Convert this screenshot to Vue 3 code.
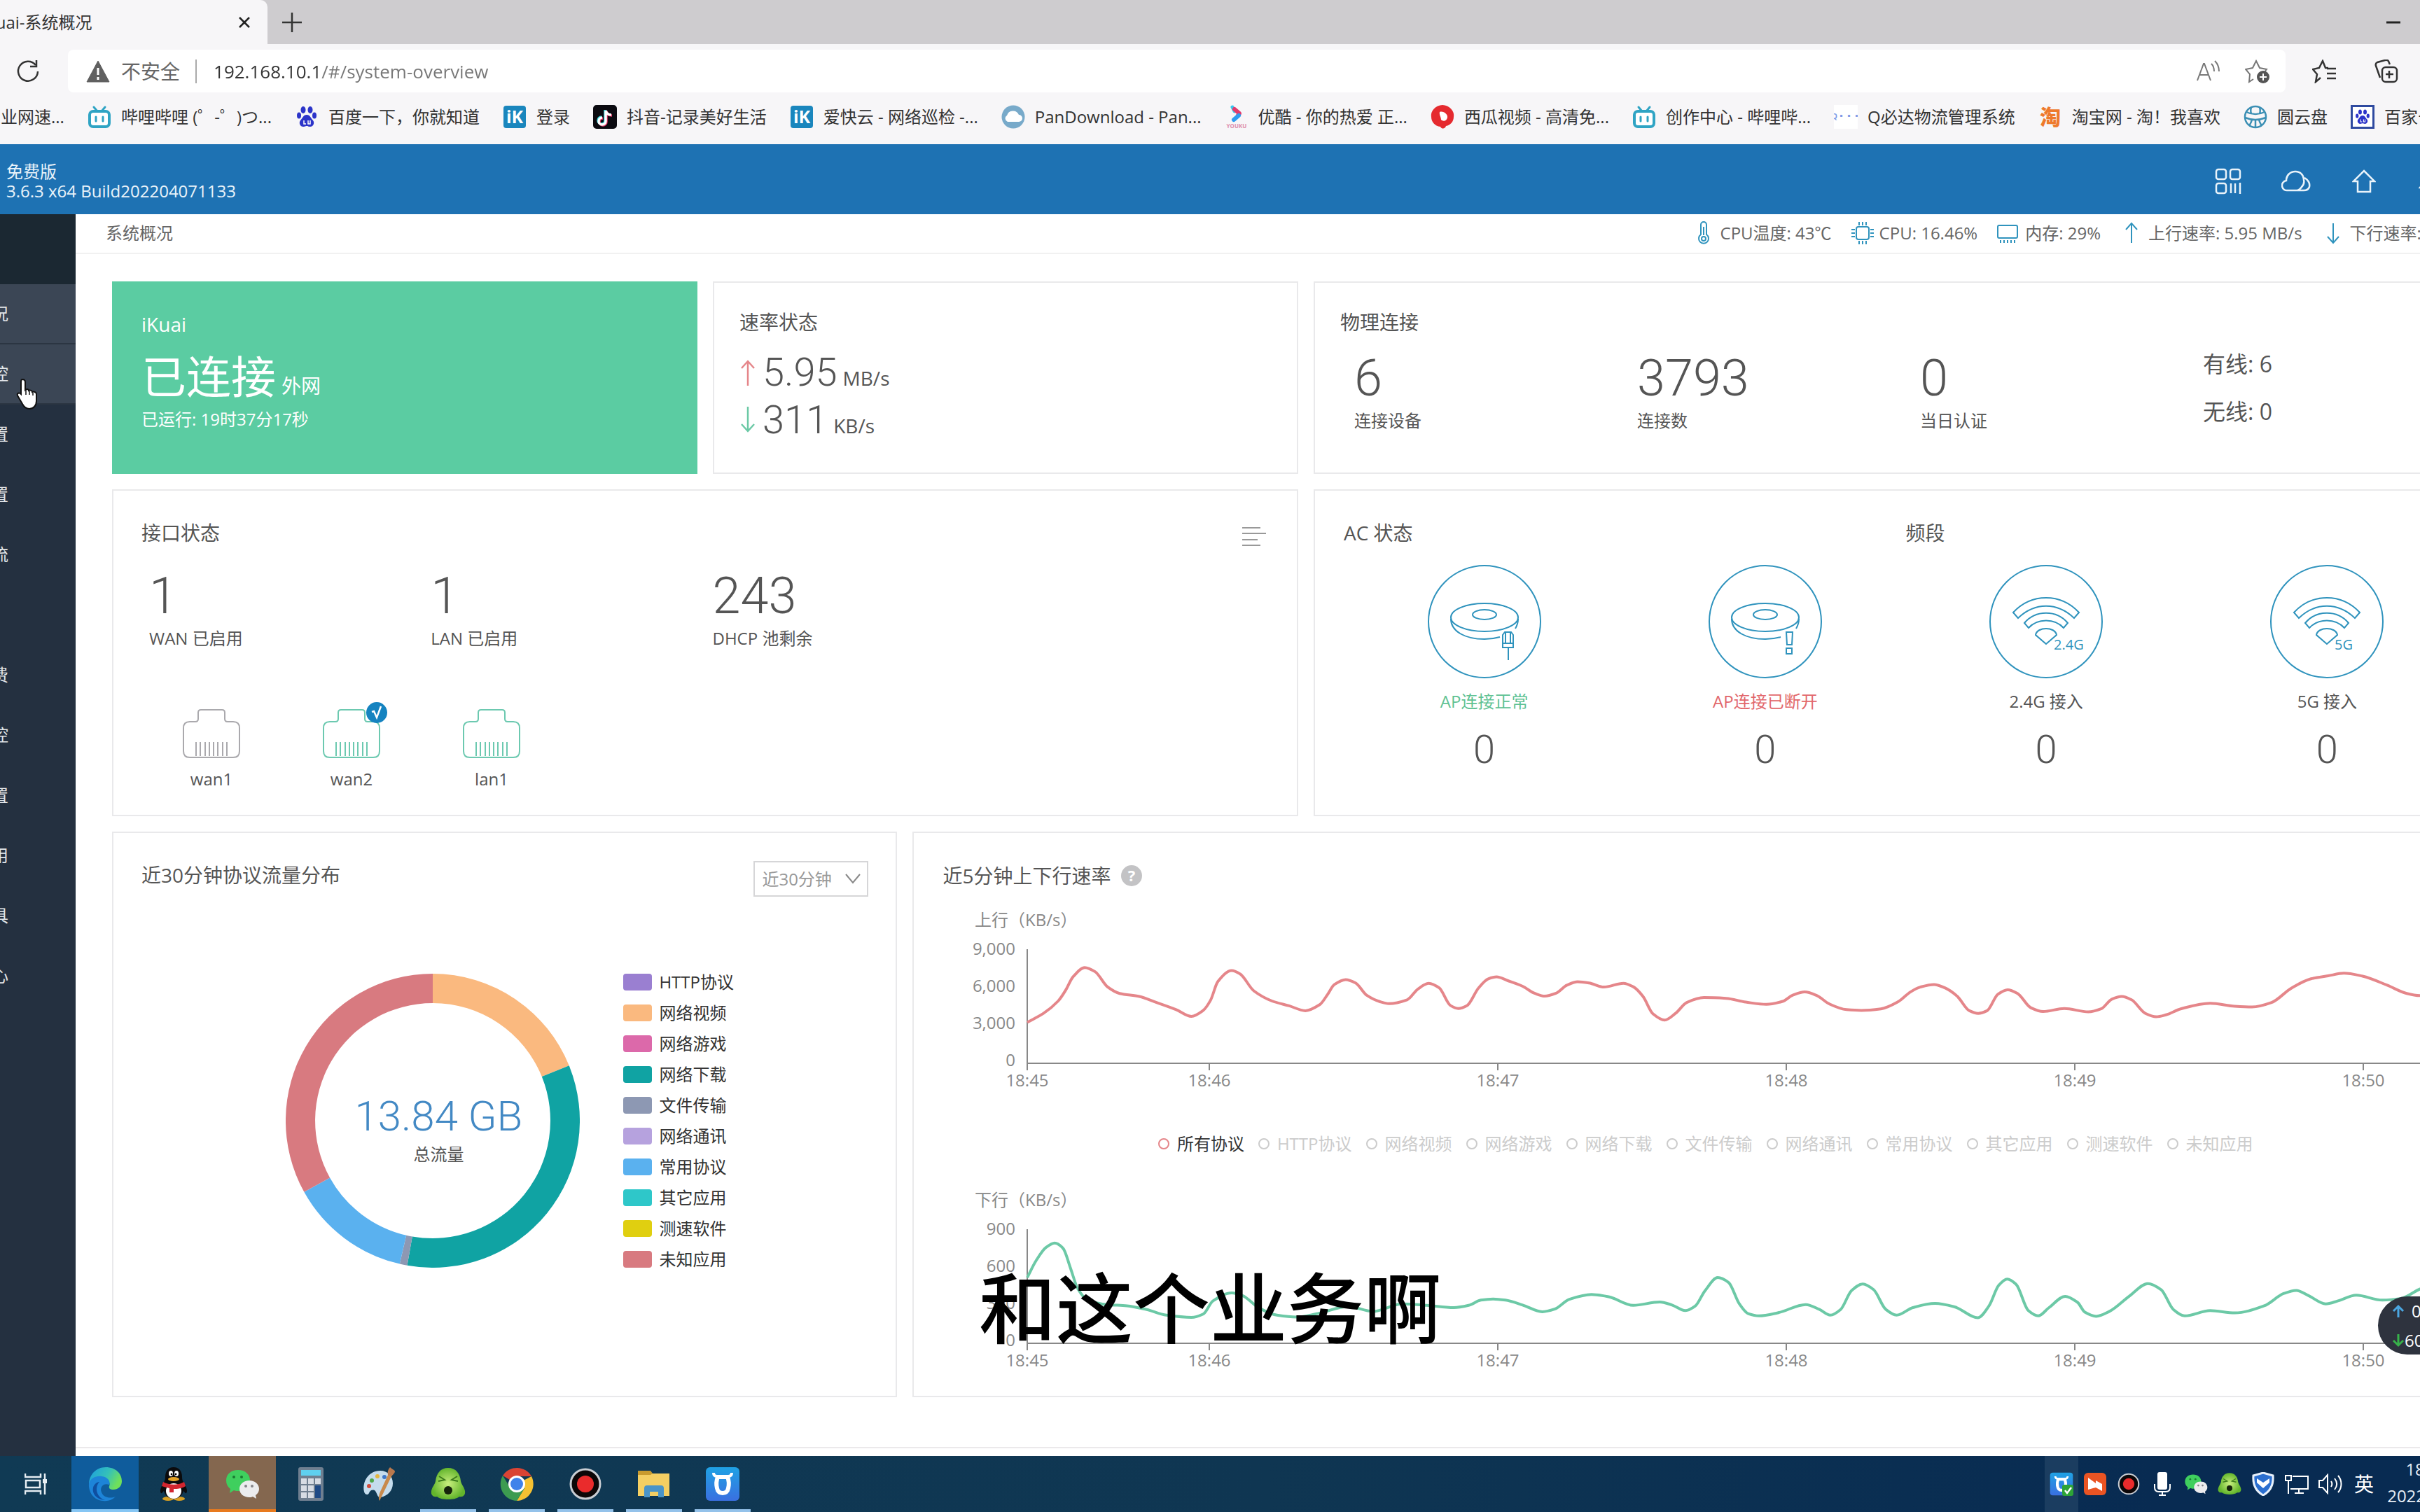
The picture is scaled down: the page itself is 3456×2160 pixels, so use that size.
<template>
	<div class="desktop">
		<svg class="sprite" aria-hidden="true">
			<defs>
				<linearGradient id="edge-top" x1="0" y1="0" x2="1" y2="0.4">
					<stop offset="0" stop-color="#1b9de2" />
					<stop offset="0.6" stop-color="#35c1b8" />
					<stop offset="1" stop-color="#6fe05a" />
				</linearGradient>
				<linearGradient id="blue-fade" x1="0" y1="0" x2="0" y2="1">
					<stop offset="0" stop-color="#1fa2e4" />
					<stop offset="1" stop-color="#3a6fe0" />
				</linearGradient>
				<radialGradient id="frog-skin">
					<stop offset="0" stop-color="#c9ef7e" />
					<stop offset="1" stop-color="#63b52c" />
				</radialGradient>
			</defs>
			<symbol id="bilibili" viewBox="0 0 34 34">
				<path d="M9 3l5 6M25 3l-5 6" stroke="#2fa4c4" stroke-width="3" stroke-linecap="round" />
				<rect x="3" y="9" width="28" height="22" rx="5" fill="#fff" stroke="#2fa4c4" stroke-width="4" />
				<path d="M12 17v6M22 17v6" stroke="#2fa4c4" stroke-width="3" stroke-linecap="round" />
			</symbol>
			<symbol id="baidu" viewBox="0 0 34 34">
				<g fill="#2c34c9">
					<ellipse cx="12" cy="7" rx="3.5" ry="5" />
					<ellipse cx="22" cy="7" rx="3.5" ry="5" />
					<ellipse cx="6" cy="15" rx="3" ry="4.5" />
					<ellipse cx="28" cy="15" rx="3" ry="4.5" />
					<path d="M17 14c5 0 6 5 9 8 3 4 0 9-4 9-3 0-3-1-5-1s-2 1-5 1c-4 0-7-5-4-9 3-3 4-8 9-8z" />
				</g>
				<path d="M13 22v5h3M19 22v5h3v-5" fill="none" stroke="#fff" stroke-width="1.5" />
			</symbol>
			<symbol id="baijia" viewBox="0 0 34 34">
				<rect x="1.5" y="1.5" width="31" height="31" fill="#fff" stroke="#2f4aa0" stroke-width="3" />
				<use href="#baidu" x="5" y="5" width="24" height="24" />
			</symbol>
			<symbol id="ikuai" viewBox="0 0 34 34">
				<rect x="1" y="1" width="32" height="32" rx="4" fill="#1a86bd" />
			</symbol>
			<symbol id="douyin" viewBox="0 0 34 34">
				<rect width="34" height="34" rx="5" fill="#0b0a10" />
				<g fill="none" stroke-width="3.5">
					<path d="M17 7v15a5 5 0 1 1-5-5M17 8c1 4 4 6 8 6" stroke="#36d6dc" />
					<path d="M19 9v15a5 5 0 1 1-5-5M19 9c1 4 4 6 8 6" stroke="#e8396a" />
					<path d="M18 8v15a5 5 0 1 1-5-5M18 8c1 4 4 6 8 6" stroke="#fff" />
				</g>
			</symbol>
			<symbol id="pandownload" viewBox="0 0 34 34">
				<circle cx="17" cy="17" r="16.5" fill="#78aaca" />
				<path d="M9 24a5 5 0 0 1-1-9 9 9 0 0 1 17-1 5 5 0 0 1 0 10z" fill="#fff" />
			</symbol>
			<symbol id="youku" viewBox="0 0 34 34">
				<path d="M11 3l3 6" stroke="#38c8ee" stroke-width="5" stroke-linecap="round" />
				<path d="M14 6l7 6-2 3" fill="none" stroke="#e23a6d" stroke-width="6" stroke-linecap="round" stroke-linejoin="round" />
				<path d="M20 15l-7 6" stroke="#2f9cf0" stroke-width="6" stroke-linecap="round" />
			</symbol>
			<symbol id="xigua" viewBox="0 0 34 34">
				<path d="M17 0a17 15 0 0 1 16 17c0 7-5 12-11 13-1 4-6 5-8 1C6 30 1 24 1 17A17 15 0 0 1 17 0z" fill="#e52a2f" />
				<path d="M13 10c5-2 12 3 11 8-1 5-6 6-9 3 0-4-3-7-2-11z" fill="#fff" />
			</symbol>
			<symbol id="qbida" viewBox="0 0 34 34">
				<rect width="34" height="34" fill="#fff" />
			</symbol>
			<symbol id="globe" viewBox="0 0 34 34">
				<g fill="none" stroke="#3b8fb4" stroke-width="2.5">
					<circle cx="17" cy="17" r="15" />
					<path d="M4 10c8 4 18 4 26 0M2 18c10 4 20 4 30 0M12 21c-1 4-3 7-4 9M22 21c1 4 3 7 4 9M11 3c-1 4-1 7 0 9M23 3c1 4 1 7 0 9M17 20v12" />
				</g>
			</symbol>
			<symbol id="edge" viewBox="0 0 50 50">
				<path d="M2 26C2 12 12 1 26 1c14 0 23 9 23 20 0 8-6 12-12 12-5 0-7-2-6-5 2-4-1-10-9-10-8 0-13 6-14 12z" fill="url(#edge-top)" />
				<path d="M2 24C4 17 12 13 20 14c9 1 13 7 11 12-9-3-14 4-11 11 3 8 13 9 20 6-5 5-11 7-18 6C9 48 1 37 2 24z" fill="#1d84d8" />
				<path d="M17 22c-5 5-6 15 1 22 2 2 4 3 7 4C12 47 6 38 8 30c1-4 5-8 9-8z" fill="#0f4fa0" />
			</symbol>
			<symbol id="qq" viewBox="0 0 50 50">
				<ellipse cx="17" cy="46" rx="8" ry="3" fill="#d9a022" />
				<ellipse cx="33" cy="46" rx="8" ry="3" fill="#d9a022" />
				<path d="M25 1c8 0 12 6 12 14 0 4 1 6 4 11 3 5 4 10 2 12-1 1-3-2-4-3-2 7-7 11-14 11s-12-4-14-11c-1 1-3 4-4 3-2-2-1-7 2-12 3-5 4-7 4-11C13 7 17 1 25 1z" fill="#0b0b0d" />
				<ellipse cx="25" cy="35" rx="11" ry="11" fill="#fff" />
				<ellipse cx="21" cy="10" rx="3" ry="4" fill="#fff" />
				<ellipse cx="29" cy="10" rx="3" ry="4" fill="#fff" />
				<circle cx="22" cy="11" r="1.4" fill="#000" />
				<circle cx="28" cy="11" r="1.4" fill="#000" />
				<ellipse cx="25" cy="18" rx="8" ry="3" fill="#e3a227" />
				<path d="M10 22c9 5 21 5 30 0l2 6c-5 3-10 4-17 4v5h-6v-6c-4-1-8-2-11-3z" fill="#d22630" />
			</symbol>
			<symbol id="wechat" viewBox="0 0 50 50">
				<path d="M19 5c10 0 17 6 17 15s-7 15-17 15c-2 0-4 0-6-1l-6 4 1-6c-4-3-6-7-6-12C2 11 9 5 19 5z" fill="#3fcf5e" />
				<circle cx="13" cy="15" r="2" fill="#1b7a33" />
				<circle cx="24" cy="15" r="2" fill="#1b7a33" />
				<path d="M35 20c8 0 14 5 14 12 0 4-2 7-5 9l1 5-5-3c-2 1-3 1-5 1-8 0-14-5-14-12s6-12 14-12z" fill="#ececee" />
				<circle cx="30" cy="28" r="2" fill="#85858a" />
				<circle cx="39" cy="28" r="2" fill="#85858a" />
			</symbol>
			<symbol id="calculator" viewBox="0 0 50 50">
				<rect x="7" y="1" width="36" height="48" rx="3" fill="#6f7f90" />
				<rect x="11" y="5" width="28" height="8" fill="#5fd0ef" />
				<g fill="#d7dce4">
					<rect x="11" y="17" width="8" height="8" />
					<rect x="21" y="17" width="8" height="8" />
					<rect x="31" y="17" width="8" height="8" />
					<rect x="11" y="27" width="8" height="8" />
					<rect x="21" y="27" width="8" height="8" />
					<rect x="11" y="37" width="8" height="8" />
					<rect x="21" y="37" width="8" height="8" />
				</g>
				<rect x="31" y="27" width="8" height="18" fill="#1e4a86" />
			</symbol>
			<symbol id="paint" viewBox="0 0 50 50">
				<path d="M26 6c11 0 18 8 18 18 0 11-8 18-17 20-5 1-5-5-8-9-3-3-8-1-9 3-1 3-6 3-7-2C0 22 9 6 26 6z" fill="#c5dced" />
				<circle cx="14" cy="20" r="3" fill="#4fa84a" />
				<circle cx="10" cy="28" r="3" fill="#d24a3a" />
				<circle cx="22" cy="14" r="3" fill="#e3b740" />
				<circle cx="32" cy="15" r="3" fill="#3f78c9" />
				<path d="M44 10L25 49c-2-3-1-8 1-13L38 10z" fill="#c88a4d" />
				<path d="M37 12c-1-4 0-8 3-11 3 3 7 4 7 6s-3 5-5 7z" fill="#b9784d" />
			</symbol>
			<symbol id="frog" viewBox="0 0 50 50">
				<path d="M25 2c11 0 17 8 18 19 1 5 5 8 6 14 1 6-3 9-8 8-4 3-9 4-16 4s-12-1-16-4c-5 1-9-2-8-8 1-6 5-9 6-14C8 10 14 2 25 2z" fill="url(#frog-skin)" />
				<path d="M12 14l8 5-9 2M38 14l-8 5 9 2" fill="none" stroke="#3b7a1b" stroke-width="2" />
				<ellipse cx="25" cy="34" rx="6" ry="6" fill="#16240c" />
			</symbol>
			<symbol id="chrome" viewBox="0 0 50 50">
				<path d="M25 25L5 13A24 24 0 0 1 46 14H25z" fill="#da4434" />
				<path d="M25 25L46 14a24 24 0 0 1-21 35l11-18z" fill="#f5c132" />
				<path d="M25 25L36 31 25 49A24 24 0 0 1 5 13l11 18z" fill="#3c9b50" />
				<circle cx="25" cy="25" r="12" fill="#fff" />
				<circle cx="25" cy="25" r="9" fill="#3f82ea" />
			</symbol>
			<symbol id="record" viewBox="0 0 50 50">
				<circle cx="25" cy="25" r="21" fill="#0c0708" stroke="#c9cdd3" stroke-width="3" />
				<circle cx="25" cy="25" r="12" fill="#ea2b2c" />
			</symbol>
			<symbol id="folder" viewBox="0 0 50 50">
				<path d="M2 6h18l3 4h24v8H2z" fill="#c99b2e" />
				<path d="M2 12h18l3-2h24v32H2z" fill="#f4cf63" />
				<path d="M11 44V31a4 4 0 0 1 4-4h20a4 4 0 0 1 4 4v13h-8v-8H19v8z" fill="#4a94c8" />
			</symbol>
			<symbol id="ubox" viewBox="0 0 50 50">
				<rect x="1" y="1" width="48" height="48" rx="6" fill="url(#blue-fade)" />
				<path d="M12 9c0 4 2 5 5 5h16c3 0 5-1 5-5" fill="none" stroke="#fff" stroke-width="4" />
				<path d="M18 15c-2 5-2 12-1 16 1 5 4 7 8 7s7-2 8-7c1-4 1-11-1-16z" fill="none" stroke="#fff" stroke-width="6" />
			</symbol>
		</svg>

		<header class="browser">
			<div class="tab-strip">
				<div class="tab">
					<span class="tab-title">iKuai-系统概况</span>
					<button type="button" class="icon-button" aria-label="关闭标签页">
						<svg width="18" height="18" viewBox="0 0 18 18"><path d="M2 2l14 14M16 2L2 16" stroke="#222" stroke-width="2.5" /></svg>
					</button>
				</div>
				<button type="button" class="icon-button new-tab" aria-label="新建标签页">
					<svg width="30" height="30" viewBox="0 0 30 30"><path d="M15 1v28M1 15h28" stroke="#333" stroke-width="2.5" /></svg>
				</button>
				<button type="button" class="icon-button minimize" aria-label="最小化">
					<svg width="22" height="22" viewBox="0 0 22 22"><path d="M1 11h20" stroke="#222" stroke-width="3" /></svg>
				</button>
			</div>

			<div class="toolbar">
				<button type="button" class="icon-button reload" aria-label="刷新">
					<svg width="34" height="34" viewBox="0 0 34 34" fill="none" stroke="#333" stroke-width="2.5">
						<path d="M28 8A14 14 0 1 0 31 17" /><path d="M29 1v9h-9" />
					</svg>
				</button>
				<div class="address-bar">
					<svg width="34" height="32" viewBox="0 0 34 32">
						<path d="M17 1l16 30H1z" fill="#606060" stroke="#606060" stroke-linejoin="round" />
						<path d="M17 11v10M17 24v4" stroke="#fff" stroke-width="3" />
					</svg>
					<label class="insecure" for="address">不安全</label>
					<input id="address" v-model="address" class="address" type="text" spellcheck="false">
					<button type="button" class="icon-button" aria-label="大声朗读">
						<svg width="34" height="34" viewBox="0 0 34 34" fill="none" stroke="#777" stroke-width="2">
							<path d="M2 30L11 6h1l9 24M5 22h13M22 6c3 3 4 7 4 11M27 2c4 4 6 9 6 15" />
						</svg>
					</button>
					<button type="button" class="icon-button" aria-label="添加到收藏夹">
						<svg width="36" height="36" viewBox="0 0 36 36" fill="none" stroke="#777" stroke-width="2">
							<path d="M12 29l-6 4 1-11-6-7 10-2 5-10 5 10 10 2-3 4" />
							<circle cx="26" cy="26" r="9" fill="#555" stroke="none" />
							<path d="M26 21v10M21 26h10" stroke="#fff" />
						</svg>
					</button>
				</div>
				<button type="button" class="icon-button wide" aria-label="收藏夹">
					<svg width="36" height="34" viewBox="0 0 36 34" fill="none" stroke="#333" stroke-width="2.5">
						<path d="M12 26l-7 6 2-11-6-7 9-2 5-10 4 10h4M21 13h13M21 20h13M21 27h13" />
					</svg>
				</button>
				<button type="button" class="icon-button wide" aria-label="集锦">
					<svg width="34" height="34" viewBox="0 0 34 34" fill="none" stroke="#333" stroke-width="2.5">
						<path d="M8 26L2 9c-1-3 0-4 2-5l11-3c3-1 5 0 6 4l1 2" />
						<rect x="11" y="11" width="21" height="21" rx="5" /><path d="M21 16v11M16 21h11" />
					</svg>
				</button>
			</div>

			<nav class="bookmarks">
				<a v-for="(mark, i) in bookmarks" :key="i" href="#" class="bookmark">
					<svg v-if="mark.icon" width="34" height="34">
						<use :href="'#' + mark.icon" />
						<text v-if="mark.glyph" x="17" :y="mark.baseline" text-anchor="middle" :class="'glyph-' + mark.icon">{{ mark.glyph }}</text>
					</svg>
					<span>{{ mark.label }}</span>
				</a>
			</nav>
		</header>

		<div class="app">
			<header class="app-header">
				<div class="version">
					<div>免费版</div>
					<div>3.6.3 x64 Build202204071133</div>
				</div>
				<div class="header-actions">
					<button type="button" class="icon-button" aria-label="应用">
						<svg width="38" height="38" viewBox="0 0 38 38" fill="none" stroke="currentColor" stroke-width="2.5">
							<rect x="2" y="2" width="14" height="14" rx="3" /><rect x="22" y="2" width="14" height="14" rx="3" />
							<rect x="2" y="22" width="14" height="14" rx="3" /><path d="M23 22v14M29 22v14M36 21v16" />
						</svg>
					</button>
					<button type="button" class="icon-button" aria-label="云服务">
						<svg width="42" height="32" viewBox="0 0 42 32" fill="none" stroke="currentColor" stroke-width="2.5">
							<path d="M9 29a7 7 0 0 1-2-14C7 7 13 2 20 2s12 5 12 12c1 4-1 8-3 10-2 3-4 5-7 5z" /><path d="M33 11c5 3 8 8 7 13-1 3-4 5-8 5h-9" />
						</svg>
					</button>
					<button type="button" class="icon-button" aria-label="升级">
						<svg width="34" height="34" viewBox="0 0 34 34" fill="none" stroke="currentColor" stroke-width="2.5">
							<path d="M17 2l15 15h-6v15H8V17H2z" />
						</svg>
					</button>
					<button type="button" class="icon-button" aria-label="消息">
						<svg width="38" height="38" viewBox="0 0 38 38" fill="none" stroke="currentColor" stroke-width="2.5">
							<path d="M2 28l6-8v-7a11 11 0 0 1 22 0v7l6 8zM15 32c1 3 7 3 8 0" />
						</svg>
					</button>
				</div>
			</header>

			<div class="app-body">
				<nav class="sidebar">
					<a
						v-for="(item, i) in menu"
						:key="item"
						href="#"
						class="menu-item"
						:class="{ 'is-active': i < 2 }"
					>{{ item }}</a>
				</nav>

				<div class="content">
					<div class="crumbs">
						<span>系统概况</span>
						<ul class="status">
							<li>
								<svg width="34" height="34" viewBox="0 0 34 34" class="line-icon">
									<path d="M13 19V5a4 4 0 0 1 8 0v14a7 7 0 1 1-8 0zM17 8v12" /><circle cx="17" cy="25" r="3" />
								</svg>
								CPU温度: 43℃
							</li>
							<li>
								<svg width="34" height="34" viewBox="0 0 34 34" class="line-icon">
									<rect x="8" y="8" width="18" height="18" rx="3" />
									<path d="M12 1v5M17 1v5M22 1v5M12 28v5M17 28v5M22 28v5M1 12h5M1 17h5M1 22h5M28 12h5M28 17h5M28 22h5" />
								</svg>
								CPU: 16.46%
							</li>
							<li>
								<svg width="34" height="34" viewBox="0 0 34 34" class="line-icon">
									<rect x="2" y="6" width="28" height="18" rx="2" /><path d="M6 27v4M11 27v4M16 27v4M21 27v4M26 27v4" />
								</svg>
								内存: 29%
							</li>
							<li>
								<svg width="34" height="34" viewBox="0 0 34 34" class="line-icon"><path d="M17 31V4M9 12l8-9 8 9" /></svg>
								上行速率: 5.95 MB/s
							</li>
							<li>
								<svg width="34" height="34" viewBox="0 0 34 34" class="line-icon"><path d="M17 3v27M9 22l8 9 8-9" /></svg>
								下行速率: 311 KB/s
							</li>
						</ul>
					</div>

					<main class="grid">
						<section class="card card-online">
							<h2>iKuai</h2>
							<p class="online"><strong>已连接</strong> 外网</p>
							<p class="uptime">已运行: 19时37分17秒</p>
						</section>

						<section class="card card-rate">
							<h2>速率状态</h2>
							<p class="rate">
								<svg width="24" height="38" viewBox="0 0 24 38" fill="none" stroke="#e5868a" stroke-width="2.5"><path d="M12 38V4M3 13l9-10 9 10" /></svg>
								<b>5.95</b>MB/s
							</p>
							<p class="rate">
								<svg width="24" height="38" viewBox="0 0 24 38" fill="none" stroke="#6cc9a6" stroke-width="2.5"><path d="M12 0v34M3 25l9 10 9-10" /></svg>
								<b>311</b>KB/s
							</p>
						</section>

						<section class="card card-links">
							<h2>物理连接</h2>
							<div class="link-stats">
								<div v-for="stat in linkStats" :key="stat.label" class="stat">
									<b>{{ stat.value }}</b>
									<span>{{ stat.label }}</span>
								</div>
								<div class="media">
									<div>有线: 6</div>
									<div>无线: 0</div>
								</div>
							</div>
						</section>

						<section class="card card-ports">
							<div class="card-head">
								<h2>接口状态</h2>
								<button type="button" class="icon-button list-toggle" aria-label="列表">
									<svg width="36" height="28" viewBox="0 0 36 28"><path d="M1 1h26M1 9h34M1 18h22M1 26h26" stroke="#999" stroke-width="2" /></svg>
								</button>
							</div>
							<div class="port-stats">
								<div v-for="stat in portStats" :key="stat.label" class="stat">
									<b>{{ stat.value }}</b>
									<span>{{ stat.label }}</span>
								</div>
							</div>
							<div class="ports">
								<div v-for="port in ports" :key="port.name" class="port" :class="{ 'is-up': port.up }">
									<div class="port-icon">
										<svg width="82" height="70" viewBox="0 0 82 70" fill="none" stroke="currentColor" stroke-width="2">
											<path d="M10 18h8q4 0 4-4V5q0-4 4-4h30q4 0 4 4v9q0 4 4 4h8q9 0 9 9v33q0 9-9 9H10q-9 0-9-9V27q0-9 9-9z" />
											<path d="M19 47v20M25 47v20M32 47v20M38 47v20M44 47v20M50 47v20M57 47v20M63 47v20" />
										</svg>
										<svg v-if="port.current" class="port-check" width="32" height="32" viewBox="0 0 32 32">
											<circle cx="16" cy="16" r="15" fill="#1583c0" />
											<path d="M9 15l3-1 4 9 6-16" fill="none" stroke="#fff" stroke-width="2.5" />
										</svg>
									</div>
									<span>{{ port.name }}</span>
								</div>
							</div>
						</section>

						<section class="card card-ac">
							<div class="ac-head">
								<h2>AC 状态</h2>
								<h2>频段</h2>
							</div>
							<div class="ac-items">
								<div v-for="item in acItems" :key="item.label" class="ac-item">
									<svg width="162" height="162" viewBox="0 0 162 162" class="line-icon">
										<circle cx="81" cy="81" r="80" />
										<g v-if="item.icon === 'ap' || item.icon === 'ap-off'">
											<ellipse cx="81" cy="75" rx="48" ry="20" />
											<ellipse cx="81" cy="71" rx="17" ry="7" />
											<path d="M33 77c0 18 20 29 48 29 8 0 15-1 22-3M129 77c0 6-1 9-4 14" />
											<path v-if="item.icon === 'ap'" d="M107 118V100l3-4h9l3 4v18zM107 112h15M111 97v15M118 97v15M115 118v18" />
											<path v-else d="M111 96h9l-1 18h-7zM111 119h8v8h-8z" />
										</g>
										<g v-else>
											<path d="M34 68C60 40 102 40 128 68l-7 8C97 53 65 53 41 76z" />
											<path d="M50 83C66 64 96 64 112 83l-6 7C93 76 69 76 56 90z" />
											<path d="M81 113L66 100C68 88 94 88 96 100z" />
											<text x="92" y="121" class="band">{{ item.icon }}</text>
										</g>
									</svg>
									<span :class="item.tone">{{ item.label }}</span>
									<b>0</b>
								</div>
							</div>
						</section>

						<div class="charts">
							<section class="card card-traffic">
								<div class="card-head">
									<h2>近30分钟协议流量分布</h2>
									<div class="range">
										<select v-model="range" aria-label="时间范围">
											<option>近30分钟</option>
											<option>近1小时</option>
										</select>
										<svg width="24" height="16" viewBox="0 0 24 16" fill="none" stroke="#888" stroke-width="2"><path d="M2 1l10 12L22 1" /></svg>
									</div>
								</div>
								<div class="traffic">
									<div class="donut">
										<svg width="420" height="420" viewBox="-210 -210 420 420">
											<path v-for="arc in donutArcs" :key="arc.color" :d="arc.path" :fill="arc.color" />
										</svg>
										<div class="donut-total">
											<b>13.84 GB</b>
											<span>总流量</span>
										</div>
									</div>
									<ul class="protocols">
										<li v-for="p in protocols" :key="p.name">
											<i :style="{ background: p.color }"></i>{{ p.name }}
										</li>
									</ul>
								</div>
							</section>

							<section class="card card-trend">
								<h2>
									近5分钟上下行速率
									<svg width="32" height="32" viewBox="0 0 32 32">
										<circle cx="16" cy="16" r="15" fill="#c3c3c5" />
										<text x="16" y="24" text-anchor="middle" class="help-mark">?</text>
									</svg>
								</h2>
								<template v-for="(chart, i) in charts" :key="chart.title">
									<svg class="trend" height="280">
										<text x="46" y="31">{{ chart.title }}</text>
										<text v-for="(label, n) in chart.labels" :key="label" x="104" :y="72 + n * 53" text-anchor="end">{{ label }}</text>
										<path d="M121 64v164M121 227H2300" class="axis" />
										<g v-for="tick in ticks" :key="tick.label">
											<path :d="`M${tick.x} 227v10`" class="axis" />
											<text :x="tick.x" y="260" text-anchor="middle">{{ tick.label }}</text>
										</g>
										<path :d="chart.path" :stroke="chart.color" class="curve" />
									</svg>
									<div v-if="i === 0" class="series">
										<button
											v-for="name in series"
											:key="name"
											type="button"
											:class="{ 'is-on': name === activeSeries }"
											@click="activeSeries = name"
										>
											<i></i>{{ name }}
										</button>
									</div>
								</template>
							</section>
						</div>
					</main>
					<div class="content-foot"></div>
				</div>
			</div>
		</div>

		<footer class="taskbar">
			<button type="button" class="task" aria-label="任务视图">
				<svg width="34" height="32" viewBox="0 0 34 32" fill="none" stroke="#e6edf2" stroke-width="2.5">
					<path d="M1 1v5h22V1M1 31v-5h22v5M2 11h20v10H2zM29 1v30" /><path d="M29 9v6" stroke-width="6" />
				</svg>
			</button>
			<button
				v-for="task in tasks"
				:key="task.icon"
				type="button"
				class="task"
				:class="task.state"
				:aria-label="task.icon"
			>
				<svg width="50" height="50"><use :href="'#' + task.icon" /></svg>
			</button>

			<div class="tray">
				<span class="tray-cell is-lit">
					<svg width="34" height="34" viewBox="0 0 34 34">
						<use href="#ubox" width="34" height="34" />
						<rect x="18" y="18" width="16" height="16" rx="3" fill="#2da436" />
						<path d="M22 26l3 4 6-8" fill="none" stroke="#fff" stroke-width="2.5" />
					</svg>
				</span>
				<span class="tray-cell">
					<svg width="34" height="34" viewBox="0 0 34 34">
						<rect x="1" y="1" width="32" height="32" rx="6" fill="#ea5423" />
						<path d="M7 8l11 8v-4l9 5v10l-9-5-4 1-7 2z" fill="#fff" />
					</svg>
				</span>
				<span class="tray-cell"><svg width="34" height="34"><use href="#record" /></svg></span>
				<span class="tray-cell">
					<svg width="26" height="34" viewBox="0 0 26 34" fill="none" stroke="#fff" stroke-width="2">
						<rect x="7" y="1" width="12" height="23" rx="2" fill="#fff" /><path d="M2 17v5q0 6 6 6h10q6 0 6-6v-5M13 28v5M8 33h10" />
					</svg>
				</span>
				<span class="tray-cell"><svg width="34" height="34"><use href="#wechat" /></svg></span>
				<span class="tray-cell"><svg width="34" height="34"><use href="#frog" /></svg></span>
				<span class="tray-cell">
					<svg width="32" height="34" viewBox="0 0 32 34">
						<path d="M16 1l14 4c1 13-3 22-14 28C5 27 1 18 2 5z" fill="#2b6fd0" stroke="#e8f1fb" stroke-width="3" />
						<path d="M7 9l9 6 9-6v6l-9 8-9-8z" fill="#fff" />
					</svg>
				</span>
				<span class="tray-cell">
					<svg width="34" height="30" viewBox="0 0 34 30" fill="none" stroke="#fff" stroke-width="2">
						<path d="M11 4h22v18H8M5 11v18M1 3h8v7H1zM20 22v6M14 28h13" />
					</svg>
				</span>
				<span class="tray-cell">
					<svg width="34" height="30" viewBox="0 0 34 30" fill="none" stroke="#fff" stroke-width="2">
						<path d="M1 10h5l7-8v26l-7-8H1zM18 11c2 3 2 5 0 8M23 7c4 5 4 11 0 16M28 3c6 7 6 17 0 24" />
					</svg>
				</span>
				<span class="tray-cell ime">英</span>
				<div class="clock">
					<div>18:50</div>
					<div>2022/4/11</div>
				</div>
			</div>
		</footer>

		<div class="net-badge">
			<div>
				<svg width="18" height="20" viewBox="0 0 18 20" fill="none" stroke="#4aa6e0" stroke-width="3"><path d="M9 19V3M2 10l7-7 7 7" /></svg>
				<span>0K/s</span>
			</div>
			<div>
				<svg width="18" height="20" viewBox="0 0 18 20" fill="none" stroke="#37b24a" stroke-width="3"><path d="M9 1v16M2 10l7 7 7-7" /></svg>
				<span>60K/s</span>
			</div>
		</div>

		<p class="caption">和这个业务啊</p>

		<svg class="cursor" width="34" height="46" viewBox="0 0 34 46">
			<path d="M10 2c3 0 4 2 4 4v11c2-2 5-1 5 1 2-1 5 0 5 2 2-1 6 0 6 3v10c0 6-4 11-10 11-5 0-8-3-10-7L3 25c-1-3 2-5 5-2V6c0-2 0-4 2-4z" fill="#fff" stroke="#111" stroke-width="2" />
			<path d="M15 17v7M20 19v5M25 21v4" stroke="#111" stroke-width="1.5" />
		</svg>
	</div>
</template>

<script setup>
import { computed, ref } from 'vue';

const address = ref('192.168.10.1/#/system-overview');
const range = ref('近30分钟');
const activeSeries = ref('所有协议');

const bookmarks = [
	{ label: '专业网速...' },
	{ icon: 'bilibili', label: '哔哩哔哩 (゜-゜)つ...' },
	{ icon: 'baidu', label: '百度一下，你就知道' },
	{ icon: 'ikuai', glyph: 'iK', baseline: 26, label: '登录' },
	{ icon: 'douyin', label: '抖音-记录美好生活' },
	{ icon: 'ikuai', glyph: 'iK', baseline: 26, label: '爱快云 - 网络巡检 -...' },
	{ icon: 'pandownload', label: 'PanDownload - Pan...' },
	{ icon: 'youku', glyph: 'YOUKU', baseline: 33, label: '优酷 - 你的热爱 正...' },
	{ icon: 'xigua', label: '西瓜视频 - 高清免...' },
	{ icon: 'bilibili', label: '创作中心 - 哔哩哔...' },
	{ icon: 'qbida', glyph: 'Q▪▪▪', baseline: 20, label: 'Q必达物流管理系统' },
	{ icon: 'taobao', glyph: '淘', baseline: 28, label: '淘宝网 - 淘！我喜欢' },
	{ icon: 'globe', label: '圆云盘' },
	{ icon: 'baijia', label: '百家号' },
];

const menu = [
	'系统概况',
	'状态监控',
	'系统设置',
	'网络设置',
	'流控分流',
	'AC管理',
	'认证计费',
	'行为管控',
	'安全设置',
	'高级应用',
	'系统工具',
	'服务中心',
];

const linkStats = [
	{ value: '6', label: '连接设备' },
	{ value: '3793', label: '连接数' },
	{ value: '0', label: '当日认证' },
];

const portStats = [
	{ value: '1', label: 'WAN 已启用' },
	{ value: '1', label: 'LAN 已启用' },
	{ value: '243', label: 'DHCP 池剩余' },
];

const ports = [
	{ name: 'wan1', up: false },
	{ name: 'wan2', up: true, current: true },
	{ name: 'lan1', up: true },
];

const acItems = [
	{ icon: 'ap', label: 'AP连接正常', tone: 'good' },
	{ icon: 'ap-off', label: 'AP连接已断开', tone: 'bad' },
	{ icon: '2.4G', label: '2.4G 接入' },
	{ icon: '5G', label: '5G 接入' },
];

// share is in degrees of the ring
const protocols = [
	{ name: 'HTTP协议', color: '#9a7fd1', share: 0 },
	{ name: '网络视频', color: '#fab97f', share: 68 },
	{ name: '网络游戏', color: '#dc69aa', share: 0 },
	{ name: '网络下载', color: '#10a3a3', share: 122 },
	{ name: '文件传输', color: '#8d98b3', share: 3 },
	{ name: '网络通讯', color: '#b6a2de', share: 0 },
	{ name: '常用协议', color: '#5ab1ef', share: 48 },
	{ name: '其它应用', color: '#2ec7c9', share: 0 },
	{ name: '测速软件', color: '#e0cf10', share: 0 },
	{ name: '未知应用', color: '#d87a80', share: 119 },
];

const series = ['所有协议', ...protocols.map((p) => p.name)];

const donutArcs = computed(() => {
	const arcs = [];
	let start = 0;

	protocols.filter((p) => p.share).forEach((p) => {
		arcs.push({ color: p.color, path: ringPath(start, start + p.share) });
		start += p.share;
	});

	return arcs;
});

function ringPath(from, to) {
	const at = (deg, r) => {
		const a = (deg - 90) * Math.PI / 180;
		return `${(r * Math.cos(a)).toFixed(1)} ${(r * Math.sin(a)).toFixed(1)}`;
	};
	const large = to - from > 180 ? 1 : 0;

	return `M${at(from, 210)}A210 210 0 ${large} 1 ${at(to, 210)}L${at(to, 168)}A168 168 0 ${large} 0 ${at(from, 168)}Z`;
}

// [time, level] pairs: 587 time units per minute, 302 levels from zero to the top label
const upload = [
	[0, 109], [33, 133], [63, 166], [78, 194], [93, 230], [117, 255], [138, 244], [163, 204], [188, 186], [228, 178],
	[263, 162], [303, 143], [334, 125], [358, 141], [373, 168], [388, 218], [416, 247], [433, 238], [461, 193], [498, 166],
	[533, 153], [566, 140], [595, 156], [611, 183], [625, 210], [648, 223], [668, 214], [691, 181], [718, 164], [736, 159],
	[773, 169], [795, 198], [817, 213], [838, 201], [861, 154], [877, 146], [895, 154], [918, 200], [938, 225], [955, 230],
	[978, 220], [1008, 205], [1033, 186], [1053, 179], [1075, 186], [1098, 208], [1120, 217], [1143, 214], [1173, 203],
	[1213, 213], [1233, 204], [1253, 178], [1273, 132], [1297, 115], [1319, 133], [1342, 162], [1377, 175], [1422, 173],
	[1462, 163], [1504, 157], [1537, 165], [1557, 181], [1582, 190], [1607, 180], [1632, 158], [1667, 143], [1697, 141],
	[1737, 145], [1772, 164], [1797, 190], [1817, 203], [1845, 210], [1867, 201], [1892, 179], [1917, 140], [1935, 133],
	[1953, 140], [1975, 184], [1995, 196], [2015, 186], [2042, 148], [2067, 138], [2110, 146], [2159, 137], [2185, 145],
	[2207, 171], [2227, 178], [2247, 169], [2275, 133], [2297, 124], [2317, 129], [2347, 145], [2407, 160], [2457, 152],
	[2492, 150], [2532, 162], [2572, 200], [2612, 225], [2647, 233], [2679, 240], [2717, 232], [2767, 208], [2807, 186],
	[2835, 180], [2900, 178],
];

const download = [
	[0, 175], [18, 220], [38, 255], [56, 267], [73, 253], [88, 200], [103, 145], [123, 115], [163, 103], [203, 100],
	[243, 90], [283, 75], [334, 69], [358, 78], [378, 113], [416, 134], [438, 127], [473, 93], [508, 75], [548, 70],
	[593, 80], [653, 98], [703, 85], [763, 105], [813, 101], [868, 95], [898, 101], [923, 115], [948, 118], [973, 115],
	[1008, 102], [1048, 84], [1073, 91], [1103, 117], [1148, 130], [1183, 124], [1233, 101], [1287, 110], [1312, 102],
	[1339, 87], [1359, 99], [1379, 140], [1405, 175], [1427, 162], [1449, 105], [1467, 79], [1489, 73], [1527, 81],
	[1584, 103], [1612, 90], [1634, 75], [1655, 90], [1677, 140], [1700, 158], [1722, 143], [1747, 90], [1769, 75],
	[1802, 95], [1847, 106], [1887, 97], [1934, 68], [1957, 100], [1977, 155], [1994, 171], [2012, 157], [2037, 87],
	[2057, 73], [2079, 95], [2112, 125], [2137, 109], [2152, 83], [2175, 72], [2202, 85], [2242, 125], [2280, 159],
	[2307, 143], [2332, 90], [2355, 73], [2407, 87], [2457, 81], [2517, 100], [2557, 133], [2582, 141], [2607, 127],
	[2642, 105], [2667, 113], [2704, 128], [2757, 115], [2797, 120], [2835, 145], [2900, 165],
];

const charts = computed(() => [
	{
		title: '上行（KB/s）',
		labels: ['9,000', '6,000', '3,000', '0'],
		color: '#e5868a',
		path: curvePath(upload),
	},
	{
		title: '下行（KB/s）',
		labels: ['900', '600', '300', '0'],
		color: '#6cc9a6',
		path: curvePath(download),
	},
]);

const ticks = [
	{ x: 121, label: '18:45' },
	{ x: 381, label: '18:46' },
	{ x: 793, label: '18:47' },
	{ x: 1205, label: '18:48' },
	{ x: 1617, label: '18:49' },
	{ x: 2029, label: '18:50' },
];

// Monotone cubic, so that the peaks stay on their samples.
function curvePath(samples) {
	const pts = samples.map(([t, level]) => [121 + t * 412 / 587, 227 - level * 162 / 302]);
	const slopes = pts.map((p, i) => {
		if (i === 0 || i === pts.length - 1) {
			return null;
		}
		const a = (p[1] - pts[i - 1][1]) / (p[0] - pts[i - 1][0]);
		const b = (pts[i + 1][1] - p[1]) / (pts[i + 1][0] - p[0]);
		return a * b <= 0 ? 0 : 2 * a * b / (a + b);
	});
	const last = pts.length - 1;

	slopes[0] = (pts[1][1] - pts[0][1]) / (pts[1][0] - pts[0][0]);
	slopes[last] = (pts[last][1] - pts[last - 1][1]) / (pts[last][0] - pts[last - 1][0]);

	let d = `M${pts[0][0].toFixed(1)} ${pts[0][1].toFixed(1)}`;
	for (let i = 0; i < last; i += 1) {
		const [x0, y0] = pts[i];
		const [x1, y1] = pts[i + 1];
		const h = (x1 - x0) / 3;
		d += `C${(x0 + h).toFixed(1)} ${(y0 + slopes[i] * h).toFixed(1)} ${(x1 - h).toFixed(1)} ${(y1 - slopes[i + 1] * h).toFixed(1)} ${x1.toFixed(1)} ${y1.toFixed(1)}`;
	}

	return d;
}

const tasks = [
	{ icon: 'edge', state: 'is-focused' },
	{ icon: 'qq' },
	{ icon: 'wechat', state: 'is-alert' },
	{ icon: 'calculator' },
	{ icon: 'paint' },
	{ icon: 'frog', state: 'is-running' },
	{ icon: 'chrome', state: 'is-running' },
	{ icon: 'record', state: 'is-running' },
	{ icon: 'folder', state: 'is-running' },
	{ icon: 'ubox', state: 'is-running' },
];
</script>

<style>
body {
	margin: 0;
	background: #fff;
}
</style>

<style scoped>
.desktop {
	position: relative;
	display: flex;
	flex-direction: column;
	height: 100vh;
	overflow: hidden;
	font-family: "Open Sans", "Noto Sans CJK SC", sans-serif;
	font-size: 24px;
	line-height: 36px;
	color: #555;
}

.desktop * {
	box-sizing: border-box;
}

.desktop svg {
	flex: none;
	display: block;
}

.sprite {
	position: absolute;
	width: 0;
	height: 0;
}

h2,
p,
ul {
	margin: 0;
	padding: 0;
	list-style: none;
}

h2 {
	font-size: 28px;
	font-weight: 400;
	line-height: 40px;
}

b,
strong {
	font-weight: 300;
}

a {
	color: inherit;
	text-decoration: none;
}

.icon-button {
	display: flex;
	flex: none;
	align-items: center;
	justify-content: center;
	padding: 0;
	border: 0;
	background: none;
	color: inherit;
}

/* browser window */
.browser {
	flex: none;
	color: #333;
	background: #f7f6f8;
}

.tab-strip {
	display: flex;
	height: 63px;
	background: #cecccf;
}

.tab {
	display: flex;
	align-items: center;
	justify-content: space-between;
	width: 382px;
	padding-right: 24px;
	border-radius: 0 10px 0 0;
	background: #f7f6f8;
}

.tab-title {
	margin-left: -27px;
}

.new-tab {
	width: 70px;
}

.minimize {
	width: 76px;
	margin-left: auto;
}

.toolbar {
	display: flex;
	align-items: center;
	height: 77px;
	padding-right: 4px;
}

.reload {
	width: 80px;
	margin-right: 17px;
}

.address-bar {
	display: flex;
	flex: 1;
	align-items: center;
	gap: 36px;
	height: 61px;
	margin-right: 12px;
	padding: 0 22px 0 26px;
	border-radius: 8px;
	background: #fff;
}

.insecure {
	margin-left: -20px;
	padding-right: 22px;
	border-right: 2px solid #aaa;
	font-size: 28px;
	line-height: 34px;
	color: #666;
}

.address {
	flex: 1;
	min-width: 0;
	margin-left: -12px;
	padding: 0;
	border: 0;
	outline: 0;
	font: inherit;
	font-size: 26px;
	color: #555;
	background: linear-gradient(90deg, #333 150px, #777 150px);
	background-clip: text;
	-webkit-text-fill-color: transparent;
}

.wide {
	width: 88px;
}

.bookmarks {
	display: flex;
	gap: 33px;
	height: 66px;
	padding-bottom: 12px;
	overflow: hidden;
	white-space: nowrap;
}

.bookmark {
	display: flex;
	flex: none;
	align-items: center;
	gap: 14px;
}

.bookmark:first-child {
	margin-left: -23px;
}

.glyph-ikuai {
	font-size: 25px;
	font-weight: 700;
	fill: #fff;
}

.glyph-youku {
	font-size: 8px;
	font-weight: 700;
	fill: #dd8fae;
}

.glyph-qbida {
	font-size: 11px;
	font-weight: 700;
	fill: #7f9be6;
}

.glyph-taobao {
	font-size: 30px;
	font-weight: 900;
	fill: #ee7a2c;
}

/* router console: a little wider than the window */
.app {
	display: flex;
	flex: 1;
	flex-direction: column;
	width: calc(100% + 164px);
	min-height: 0;
}

.app-header {
	display: flex;
	flex: none;
	align-items: center;
	justify-content: space-between;
	height: 100px;
	padding: 6px 99px 0 9px;
	color: #e9f3fa;
	background: #1e72b3;
}

.version {
	line-height: 28px;
}

.header-actions {
	display: flex;
}

.header-actions .icon-button {
	width: 97px;
}

.app-body {
	display: flex;
	flex: 1;
	min-height: 0;
}

.sidebar {
	flex: none;
	width: 108px;
	padding-top: 100px;
	overflow: hidden;
	background: linear-gradient(#1b2832 100px, #243040 100px);
}

.menu-item {
	display: block;
	height: 86px;
	border-bottom: 2px solid transparent;
	line-height: 84px;
	text-indent: -84px;
	white-space: nowrap;
	color: #e2e6ea;
}

.menu-item.is-active {
	border-color: #2b3542;
	background: #3b4655;
}

.content {
	display: flex;
	flex: 1;
	flex-direction: column;
	min-width: 0;
}

.crumbs {
	display: flex;
	align-items: center;
	justify-content: space-between;
	height: 57px;
	padding: 0 58px 2px 43px;
	border-bottom: 2px solid #f1f1f1;
	color: #666;
}

.status {
	display: flex;
	gap: 27px;
}

.status li {
	display: flex;
	align-items: center;
	gap: 7px;
}

.line-icon {
	fill: none;
	stroke: #2f93bd;
	stroke-width: 2;
}

.grid {
	display: grid;
	flex: 1;
	grid-template-columns: repeat(4, 1fr);
	grid-template-rows: auto auto 1fr;
	gap: 22px;
	padding: 39px 50px 71px 52px;
}

.card {
	border: 2px solid #e9e9eb;
	background: #fff;
}

.card-head {
	display: flex;
	justify-content: space-between;
}

.card-online {
	min-height: 275px;
	padding: 39px 40px;
	border-color: #5bcca2;
	color: #fff;
	background: #5bcca2;
}

.online {
	display: flex;
	align-items: baseline;
	gap: 8px;
	height: 80px;
	margin-top: 15px;
	font-size: 28px;
	line-height: 40px;
}

.online strong {
	font-size: 64px;
	font-weight: 400;
	line-height: 80px;
}

.uptime {
	margin-top: 3px;
}

.card-rate {
	padding: 36px;
}

.card-rate h2 {
	margin-bottom: 18px;
}

.rate {
	display: flex;
	align-items: baseline;
	font-size: 28px;
	line-height: 36px;
}

.rate b {
	margin: 0 8px 0 9px;
	font-family: Roboto, sans-serif;
	font-size: 56px;
	line-height: 68px;
}

.card-links {
	grid-column: span 2;
	padding: 36px 18px 0;
}

.card-links h2 {
	padding-left: 18px;
}

.link-stats {
	display: grid;
	grid-template-columns: repeat(4, 1fr);
	margin-top: 6px;
	padding-left: 38px;
}

.link-stats .stat {
	padding-top: 15px;
}

.stat {
	display: flex;
	flex-direction: column;
	gap: 2px;
}

.stat b {
	font-family: Roboto, sans-serif;
	font-size: 72px;
	line-height: 80px;
}

.media {
	font-size: 32px;
	line-height: 68px;
}

.card-ports {
	grid-column: span 2;
	min-height: 467px;
	padding: 40px 30px 0 40px;
}

.list-toggle {
	align-items: flex-end;
	margin-right: 13px;
}

.port-stats {
	display: grid;
	grid-template-columns: repeat(4, 1fr);
	margin-top: 31px;
	padding-left: 11px;
}

.ports {
	display: flex;
	margin-top: 83px;
}

.port {
	display: flex;
	flex-direction: column;
	align-items: center;
	gap: 12px;
	width: 200px;
}

.port-icon {
	position: relative;
	color: #aaa9ad;
}

.is-up .port-icon {
	color: #6cc9b0;
}

.port-check {
	position: absolute;
	top: -11px;
	right: -11px;
}

.card-ac {
	grid-column: span 2;
	padding: 40px 44px 0 41px;
}

.ac-head {
	display: grid;
	grid-template-columns: 1fr 1fr;
}

.ac-items {
	display: grid;
	grid-template-columns: repeat(4, 1fr);
	margin-top: 26px;
}

.ac-item {
	display: flex;
	flex-direction: column;
	align-items: center;
}

.ac-item span {
	margin-top: 15px;
}

.ac-item b {
	margin-top: 19px;
	font-family: Roboto, sans-serif;
	font-size: 56px;
	line-height: 64px;
}

.good {
	color: #5fc294;
}

.bad {
	color: #e2686c;
}

.band {
	font-size: 20px;
	fill: #2f93bd;
	stroke: none;
}

.charts {
	display: grid;
	grid-column: 1 / -1;
	grid-template-columns: 331fr 669fr;
	gap: 22px;
	min-width: 0;
}

.card-traffic {
	padding: 40px 39px 0 40px;
}

.range {
	position: relative;
}

.range select {
	height: 51px;
	padding: 0 50px 0 10px;
	border: 2px solid #d6d6d8;
	appearance: none;
	font: inherit;
	color: #999;
	background: #fff;
}

.range svg {
	position: absolute;
	top: 18px;
	right: 10px;
	pointer-events: none;
}

.traffic {
	display: flex;
	align-items: center;
	justify-content: center;
	gap: 62px;
	margin-top: 100px;
	padding-left: 14px;
}

.donut {
	position: relative;
}

.donut-total {
	position: absolute;
	inset: 0;
	display: flex;
	flex-direction: column;
	align-items: center;
	justify-content: center;
	padding: 24px 0 0 16px;
}

.donut-total b {
	font-family: Roboto, sans-serif;
	font-size: 60px;
	line-height: 72px;
	color: #4389c4;
}

.protocols li {
	display: flex;
	align-items: center;
	gap: 10px;
	line-height: 44px;
	color: #333;
}

.protocols i {
	width: 41px;
	height: 24px;
	border-radius: 4px;
}

.card-trend {
	min-width: 0;
	padding: 41px 0 0 41px;
}

.card-trend h2 {
	display: flex;
	align-items: center;
	gap: 14px;
	margin-bottom: 21px;
}

.help-mark {
	font-size: 22px;
	font-weight: 700;
	fill: #fff;
}

.trend {
	width: 100%;
	fill: #888;
}

.axis {
	fill: none;
	stroke: #888;
	stroke-width: 2;
}

.curve {
	fill: none;
	stroke-width: 4;
}

.series {
	display: flex;
	justify-content: center;
	gap: 20px;
	margin: 44px 43px 40px 0;
}

.series button {
	display: flex;
	align-items: center;
	gap: 11px;
	padding: 0;
	border: 0;
	font: inherit;
	color: #ccc;
	background: none;
}

.series i {
	width: 16px;
	height: 16px;
	border: 2px solid #ccc;
	border-radius: 50%;
}

.series .is-on {
	color: #333;
}

.series .is-on i {
	border-color: #e5868a;
}

.content-foot {
	flex: none;
	height: 13px;
	border-top: 2px solid #ebe9eb;
}

/* taskbar */
.taskbar {
	display: flex;
	flex: none;
	gap: 2px;
	width: calc(100% + 164px);
	height: 80px;
	padding: 0 88px 0 4px;
	color: #e6edf5;
	background: linear-gradient(90deg, #103a54, #0f3652 50%, #082b52 85%);
}

.task {
	display: flex;
	flex: none;
	align-items: center;
	justify-content: center;
	width: 96px;
	padding: 0;
	border: 0;
	background: none;
}

.is-focused {
	background: linear-gradient(#0f5c9c 76px, #86c6f4 76px);
}

.is-alert {
	background: linear-gradient(#84674f 76px, #e87a1e 76px);
}

.is-running {
	background: linear-gradient(#94c2ea, #94c2ea) bottom / 80px 4px no-repeat;
}

.tray {
	display: flex;
	margin-left: auto;
}

.tray-cell {
	display: flex;
	align-items: center;
	justify-content: center;
	width: 48px;
}

.tray-cell.is-lit {
	background: #1b3d60;
}

.ime {
	font-size: 28px;
	color: #fff;
}

.clock {
	width: 132px;
	text-align: center;
	line-height: 38px;
}

/* things that float over the page */
.net-badge {
	position: absolute;
	right: -80px;
	bottom: 225px;
	width: 140px;
	height: 83px;
	padding-left: 20px;
	border-radius: 42px;
	line-height: 42px;
	color: #fff;
	background: #2e333e;
}

.net-badge div {
	display: flex;
	align-items: center;
}

.net-badge div:first-child {
	gap: 10px;
}

.caption {
	position: absolute;
	right: 0;
	bottom: 228px;
	left: 0;
	font-size: 110px;
	font-weight: 500;
	line-height: 128px;
	text-align: center;
	color: #000;
}

.cursor {
	position: absolute;
	top: 540px;
	left: 22px;
}
</style>
